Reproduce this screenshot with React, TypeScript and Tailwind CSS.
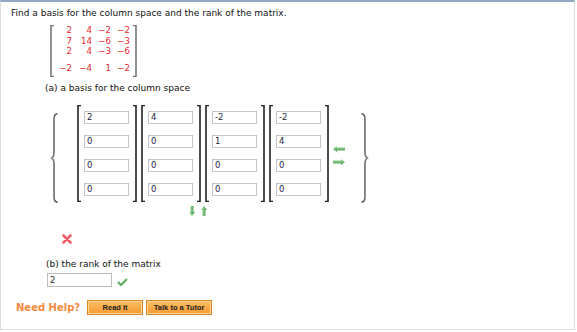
import React from 'react';

const font = { fontFamily: '"DejaVu Sans", Verdana, sans-serif' };

const matrix = [
  ['2', '4', '−2', '−2'],
  ['7', '14', '−6', '−3'],
  ['2', '4', '−3', '−6'],
  ['−2', '−4', '1', '−2'],
];

const basis = [
  ['2', '0', '0', '0'],
  ['4', '0', '0', '0'],
  ['-2', '1', '0', '0'],
  ['-2', '4', '0', '0'],
];

function Brace({ flip = false }: { flip?: boolean }) {
  return (
    <svg width="8" height="90" viewBox="0 0 8 90" className={flip ? '-scale-x-100' : ''}>
      <defs>
        <linearGradient id="braceg" x1="0" x2="1" y1="0" y2="0">
          <stop offset="0" stopColor="#9a9a9a" />
          <stop offset="1" stopColor="#3c3c3c" />
        </linearGradient>
      </defs>
      <path
        d="M7.5,0.8 Q4,1 4,6 L4,39 Q4,44.5 0.8,45 Q4,45.5 4,51 L4,84 Q4,89 7.5,89.2"
        fill="none"
        stroke="url(#braceg)"
        strokeWidth="1.6"
      />
    </svg>
  );
}

function Bracket({ side, h, color = '#222' }: { side: 'l' | 'r'; h: number; color?: string }) {
  return (
    <svg width="4" height={h} viewBox={`0 0 4 ${h}`}>
      {side === 'l' ? (
        <path d={`M4,0.5 L1,0.5 L1,${h - 0.5} L4,${h - 0.5}`} fill="none" stroke={color} strokeWidth="1.6" />
      ) : (
        <path d={`M0,0.5 L3,0.5 L3,${h - 0.5} L0,${h - 0.5}`} fill="none" stroke={color} strokeWidth="1.6" />
      )}
    </svg>
  );
}

function GreenDefs() {
  return (
    <svg width="0" height="0" className="absolute">
      <defs>
        <linearGradient id="gh" x1="0" x2="0" y1="0" y2="1">
          <stop offset="0" stopColor="#a8dca0" />
          <stop offset="1" stopColor="#3f9a4c" />
        </linearGradient>
        <linearGradient id="gv" x1="0" x2="1" y1="0" y2="0">
          <stop offset="0" stopColor="#a8dca0" />
          <stop offset="1" stopColor="#3f9a4c" />
        </linearGradient>
      </defs>
    </svg>
  );
}

function HArrow({ dir }: { dir: 'l' | 'r' }) {
  return (
    <svg width="12" height="6" viewBox="0 0 12 6">
      {dir === 'l' ? (
        <polygon points="0,3 4,0 4,1.5 12,1.5 12,4.5 4,4.5 4,6" fill="url(#gh)" />
      ) : (
        <polygon points="12,3 8,0 8,1.5 0,1.5 0,4.5 8,4.5 8,6" fill="url(#gh)" />
      )}
    </svg>
  );
}

function VArrow({ dir }: { dir: 'u' | 'd' }) {
  return (
    <svg width="6" height="10" viewBox="0 0 6 10">
      {dir === 'd' ? (
        <polygon points="3,10 0,6 1.5,6 1.5,0 4.5,0 4.5,6 6,6" fill="url(#gv)" />
      ) : (
        <polygon points="3,0 0,4 1.5,4 1.5,10 4.5,10 4.5,4 6,4" fill="url(#gv)" />
      )}
    </svg>
  );
}

function Field({ value, w = 45 }: { value: string; w?: number }) {
  return (
    <div
      className="h-[13px] border border-[#c4c4c4] bg-white pl-[2px] text-[8.5px] leading-[11px] text-[#1e1e3a]"
      style={{ width: w }}
    >
      {value}
    </div>
  );
}

function OrangeButton({ label, w }: { label: string; w: number }) {
  return (
    <div
      className="flex h-[15px] items-center justify-center border border-[#d98429] bg-gradient-to-b from-[#fcbf62] to-[#f59a2e] shadow-[inset_0_0_0_1px_#fdd596] text-[7.5px] font-bold text-[#222]"
      style={{ width: w, fontFamily: '"Liberation Sans", Arial, sans-serif' }}
    >
      {label}
    </div>
  );
}

export default function App() {
  return (
    <div className="h-[332px] w-[577px] bg-white" style={font}>
      <GreenDefs />
      <div className="flex h-[330px] w-[575px] flex-col border border-t-2 border-[#dedede] border-t-[#8fa8c6] text-[#111]">
        <p className="ml-[10px] mt-[5px] text-[9px] leading-[13px]">
          Find a basis for the column space and the rank of the matrix.
        </p>

        <div className="ml-[49px] mt-[5px] flex h-[52px]">
          <Bracket side="l" h={52} color="#777" />
          <div className="pr-[3px] text-[8.6px] leading-[10.5px] text-[#e5262b]">
            {matrix.map((row, i) => (
              <div key={i} className={`grid grid-cols-[18px_20px_19px_19px] text-right ${i === 3 ? 'mt-[6.5px]' : ''}`}>
                {row.map((v, j) => (
                  <span key={j}>{v}</span>
                ))}
              </div>
            ))}
          </div>
          <Bracket side="r" h={52} color="#777" />
        </div>

        <p className="ml-[44px] mt-[5px] text-[9px] leading-[13px]">(a) a basis for the column space</p>

        <div className="mt-[10px] flex items-start">
          <div className="ml-[49px] mt-[8px]">
            <Brace />
          </div>
          <div className="ml-[19px] flex gap-[4px]">
            {basis.map((col, i) => (
              <div key={i} className="flex">
                <Bracket side="l" h={97} />
                <div className="ml-[3px] mr-[4px] flex flex-col gap-[11px] py-[6px]">
                  {col.map((v, j) => (
                    <Field key={j} value={v} />
                  ))}
                </div>
                <Bracket side="r" h={97} />
              </div>
            ))}
          </div>
          <div className="ml-[4px] mt-[41px] flex flex-col gap-[7px]">
            <HArrow dir="l" />
            <HArrow dir="r" />
          </div>
          <div className="ml-[16px] mt-[8px]">
            <Brace flip />
          </div>
        </div>

        <div className="ml-[188px] mt-[3px] flex gap-[6px]">
          <VArrow dir="d" />
          <VArrow dir="u" />
        </div>

        <div className="ml-[61px] mt-[18px]">
          <svg width="10" height="10" viewBox="0 0 10 10">
            <path d="M1.5,1.5 L8.5,8.5 M8.5,1.5 L1.5,8.5" stroke="#f0606c" strokeWidth="2.6" strokeLinecap="round" />
          </svg>
        </div>

        <p className="ml-[45px] mt-[14px] text-[9px] leading-[13px]">(b) the rank of the matrix</p>

        <div className="ml-[46px] mt-[2px] flex items-center">
          <div className="h-[14px] w-[65px] border border-[#bdbdbd] pl-[2px] text-[8.5px] leading-[12px] text-[#1e1e3a]">2</div>
          <svg width="11" height="8" viewBox="0 0 11 8" className="ml-[5px] mt-[3px]">
            <path d="M1,4 L4,7 L10,1" fill="none" stroke="#5fae62" strokeWidth="2.2" strokeLinejoin="round" />
          </svg>
        </div>

        <div className="ml-[15px] mt-[13px] flex items-center">
          <span className="text-[10px] font-bold leading-[15px] text-[#f5893c]">Need Help?</span>
          <div className="ml-[7px] flex gap-[3px]">
            <OrangeButton label="Read It" w={56} />
            <OrangeButton label="Talk to a Tutor" w={66} />
          </div>
        </div>
      </div>
    </div>
  );
}
